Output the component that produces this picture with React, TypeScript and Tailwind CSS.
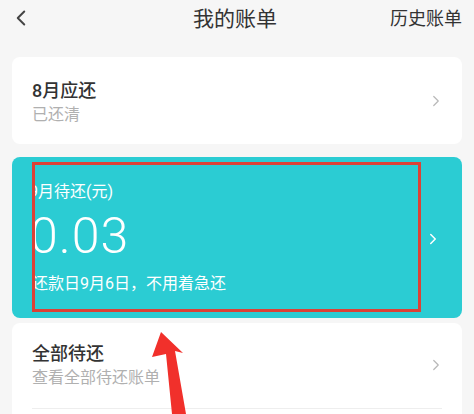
import { ChevronLeft, ChevronRight } from 'lucide-react'

const font = { fontFamily: 'Roboto, "Noto Sans CJK SC", sans-serif' }

export default function App() {
    return (
        <div className="relative w-[474px] h-[414px] overflow-hidden bg-[#f6f6f6] text-[#333]" style={font}>
            {/* header */}
            <div className="grid grid-cols-[1fr_auto_1fr] items-center h-[38px] pl-[8px] pr-[12px]">
                <ChevronLeft className="w-[26px] h-[26px] text-[#444] -mt-[3px]" strokeWidth={1.8} />
                <h1 className="text-[21px] leading-[28px]">我的账单</h1>
                <span className="justify-self-end text-[18px] leading-[24px]">历史账单</span>
            </div>

            {/* 8月 */}
            <div className="mx-[12px] mt-[19px] h-[87px] rounded-[8px] bg-white flex items-start justify-between pl-[20px] pr-[17px] pt-[22px]">
                <div>
                    <div className="text-[18px] leading-[24px] font-medium text-[#333]">8月应还</div>
                    <div className="text-[16px] leading-[22px] text-[#b0b0b0] mt-[1px]">已还清</div>
                </div>
                <ChevronRight className="w-[18px] h-[18px] text-[#b8b8b8] mt-[13px]" strokeWidth={1.6} />
            </div>

            {/* 9月 待还 */}
            <div className="mx-[12px] mt-[13px] h-[161px] rounded-[8px] bg-[#2bccd3] flex items-start pl-[20px] pt-[5px]">
                <div className="w-[389px] h-[150px] border-[3px] border-[#dc4136] overflow-hidden text-white">
                    <div className="pt-[17px] -ml-[6px] text-[16px] leading-[20px] whitespace-nowrap">9月待还(元)</div>
                    <div className="mt-[9px] -ml-[5px] text-[50px] leading-[50px] font-light tracking-[1px] whitespace-nowrap">0.03</div>
                    <div className="mt-[13px] -ml-[3px] text-[16px] leading-[20px] whitespace-nowrap">还款日9月6日，不用着急还</div>
                </div>
                <ChevronRight className="w-[18px] h-[18px] text-white ml-[3px] mt-[68px]" strokeWidth={2} />
            </div>

            {/* 全部待还 */}
            <div className="mx-[12px] mt-[5px] h-[120px] rounded-t-[8px] bg-white pl-[20px] pr-[20px]">
                <div className="flex items-start justify-between pt-[19px] pb-[19px] border-b border-[#eeeeee]">
                    <div>
                        <div className="text-[18px] leading-[24px] font-medium text-[#333]">全部待还</div>
                        <div className="text-[16px] leading-[22px] text-[#b0b0b0] mt-[1px]">查看全部待还账单</div>
                    </div>
                    <ChevronRight className="w-[18px] h-[18px] text-[#b8b8b8] mt-[14px] -mr-[3px]" strokeWidth={1.6} />
                </div>
            </div>

            {/* red annotation arrow */}
            <svg className="absolute left-0 top-0 pointer-events-none" width="474" height="414" viewBox="0 0 474 414">
                <polygon
                    points="161,332 183,353 175,351 186,414 172,414 166,354 152,357"
                    fill="#f1302b"
                />
            </svg>
        </div>
    )
}
